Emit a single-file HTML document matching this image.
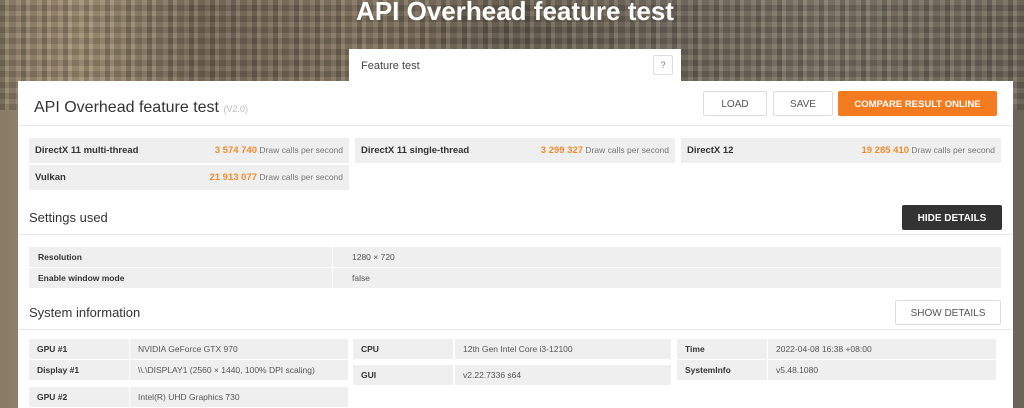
<!DOCTYPE html>
<html><head><meta charset="utf-8"><style>
*{margin:0;padding:0;box-sizing:border-box}
html,body{width:1024px;height:408px;overflow:hidden}
body{position:relative;font-family:"Liberation Sans",sans-serif;
background:linear-gradient(90deg,#8a7b66 0,#a39278 8%,#6e6353 20%,#7d705e 35%,#5f574c 50%,#6a645a 65%,#787064 80%,#6a6359 100%);}
.bg2{position:absolute;left:0;top:0;width:1024px;height:110px;background:repeating-linear-gradient(90deg,rgba(40,35,30,.25) 0 5px,rgba(210,195,170,.18) 5px 9px,rgba(70,60,50,.2) 9px 16px,rgba(180,165,140,.15) 16px 21px);}
.bg3{position:absolute;left:0;top:0;width:1024px;height:110px;background:repeating-linear-gradient(0deg,rgba(60,50,40,.15) 0 6px,rgba(200,185,160,.1) 6px 11px);}
.title{position:absolute;left:0;width:1030px;top:-4px;text-align:center;color:#fff;font-size:26px;font-weight:bold;}
.tab{position:absolute;left:349px;top:49px;width:332px;height:33px;background:#fff;font-size:11px;color:#444;padding:11px 12px}
.q{position:absolute;right:8px;top:6px;width:20px;height:20px;border:1px solid #ddd;font-size:9px;color:#777;text-align:center;line-height:18px;border-radius:2px}
.panel{position:absolute;left:18px;top:81px;width:995px;height:327px;background:#fff}
h1{position:absolute;left:16px;top:18px;font-size:16px;font-weight:normal;color:#333}
h1 small{font-size:9px;color:#bbb}
.hr{position:absolute;left:0;width:995px;height:1px;background:#e6e6e6}
.btn{position:absolute;border:1px solid #ddd;background:#fff;font-size:10px;color:#555;text-align:center;border-radius:2px}
.res{position:absolute;background:#efefef;height:25px;font-size:9.5px;padding:7px 6px;color:#333}
.res b{font-weight:bold}
.res span{position:absolute;right:6px;top:7px;color:#777;font-size:8.5px}
.res span i{font-style:normal;color:#f08a30;font-weight:bold;font-size:9.5px}
h2{position:absolute;left:11px;font-size:13px;font-weight:normal;color:#333}
.c{position:absolute;background:#efefef;font-size:8.5px;color:#555;padding:0 8px;display:flex;align-items:center}
.c.l{font-weight:bold;color:#333}
</style></head><body>
<div class="bg2"></div><div class="bg3"></div>
<div class="title">API Overhead feature test</div>
<div class="tab">Feature test<div class="q">?</div></div>
<div class="panel">
<h1>API Overhead feature test <small>(V2.0)</small></h1>
<div class="btn" style="left:685px;top:10px;width:64px;height:25px;line-height:25px">LOAD</div>
<div class="btn" style="left:755px;top:10px;width:60px;height:25px;line-height:25px">SAVE</div>
<div class="btn" style="left:820px;top:10px;width:159px;height:25px;line-height:25px;background:#f47b20;border-color:#f47b20;color:#fff;font-weight:bold;font-size:9.5px">COMPARE RESULT ONLINE</div>
<div class="hr" style="top:44px"></div>
<div class="res" style="left:11px;top:57px;width:320px"><b>DirectX 11 multi-thread</b><span><i>3 574 740</i> Draw calls per second</span></div>
<div class="res" style="left:337px;top:57px;width:320px"><b>DirectX 11 single-thread</b><span><i>3 299 327</i> Draw calls per second</span></div>
<div class="res" style="left:663px;top:57px;width:320px"><b>DirectX 12</b><span><i>19 285 410</i> Draw calls per second</span></div>
<div class="res" style="left:11px;top:84px;width:320px"><b>Vulkan</b><span><i>21 913 077</i> Draw calls per second</span></div>
<h2 style="top:129px">Settings used</h2>
<div class="btn" style="left:884px;top:124px;width:100px;height:25px;line-height:25px;background:#333;border-color:#333;color:#fff;font-weight:bold">HIDE DETAILS</div>
<div class="hr" style="top:153px"></div>
<div class="c l" style="left:11px;top:166px;width:303px;height:20px;padding-left:9px">Resolution</div>
<div class="c" style="left:315px;top:166px;width:668px;height:20px;padding-left:19px">1280 × 720</div>
<div class="c l" style="left:11px;top:187px;width:303px;height:20px;padding-left:9px">Enable window mode</div>
<div class="c" style="left:315px;top:187px;width:668px;height:20px;padding-left:19px">false</div>
<h2 style="top:224px">System information</h2>
<div class="btn" style="left:877px;top:219px;width:106px;height:25px;line-height:25px">SHOW DETAILS</div>
<div class="hr" style="top:248px"></div>
<div class="c l" style="left:11px;top:258px;width:100px;height:20px">GPU #1</div>
<div class="c" style="left:112px;top:258px;width:218px;height:20px">NVIDIA GeForce GTX 970</div>
<div class="c l" style="left:11px;top:279px;width:100px;height:20px">Display #1</div>
<div class="c" style="left:112px;top:279px;width:218px;height:20px">\\.\DISPLAY1 (2560 × 1440, 100% DPI scaling)</div>
<div class="c l" style="left:11px;top:306px;width:100px;height:20px">GPU #2</div>
<div class="c" style="left:112px;top:306px;width:218px;height:20px">Intel(R) UHD Graphics 730</div>
<div class="c l" style="left:335px;top:258px;width:100px;height:20px">CPU</div>
<div class="c" style="left:437px;top:258px;width:216px;height:20px">12th Gen Intel Core i3-12100</div>
<div class="c l" style="left:335px;top:284px;width:100px;height:20px">GUI</div>
<div class="c" style="left:437px;top:284px;width:216px;height:20px">v2.22.7336 s64</div>
<div class="c l" style="left:659px;top:258px;width:90px;height:20px">Time</div>
<div class="c" style="left:750px;top:258px;width:228px;height:20px">2022-04-08 16:38 +08:00</div>
<div class="c l" style="left:659px;top:279px;width:90px;height:20px">SystemInfo</div>
<div class="c" style="left:750px;top:279px;width:228px;height:20px">v5.48.1080</div>
</div>
</body></html>
